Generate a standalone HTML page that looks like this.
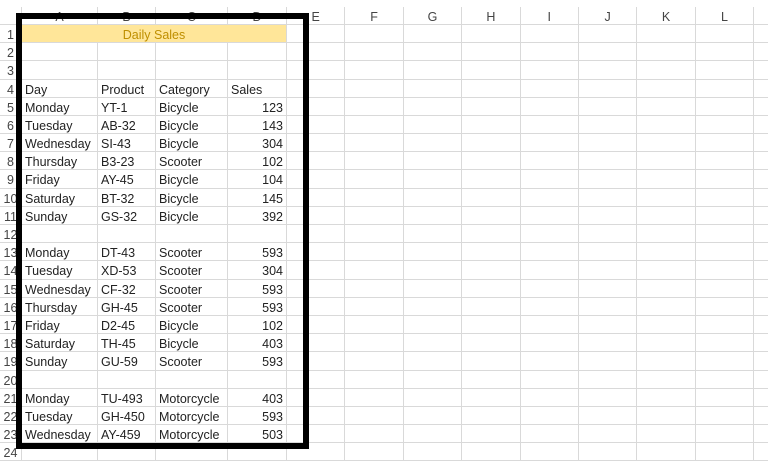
<!DOCTYPE html>
<html><head><style>
body{margin:0;width:768px;height:450px;overflow:hidden;background:#fff;font-family:"Liberation Sans",Arial,sans-serif;font-size:12.5px;color:#222;position:relative}
.r{display:flex;height:18.2px;box-sizing:border-box;border-bottom:1px solid #d9d9d9}
.c{box-sizing:border-box;border-right:1px solid #d9d9d9;height:100%;line-height:20px;padding:0 3px;white-space:nowrap;overflow:hidden;flex:none}
.h{color:#444;text-align:center;padding:0}
.n{text-align:right}
.w0{width:22px}.wa{width:76px}.wb{width:58px}.wc{width:72px}.wd{width:59px}.we{width:58.4px}
</style></head><body>
<div style="position:absolute;top:6.8px;left:0;width:768px">
<div class="r"><div class="c h w0"></div><div class="c h wa">A</div><div class="c h wb">B</div><div class="c h wc">C</div><div class="c h wd">D</div><div class="c h we">E</div><div class="c h we">F</div><div class="c h we">G</div><div class="c h we">H</div><div class="c h we">I</div><div class="c h we">J</div><div class="c h we">K</div><div class="c h we">L</div><div class="c h we">M</div></div>
<div id="rows"></div>
</div>
<div style="position:absolute;left:16px;top:13px;width:281px;height:424px;border:6px solid #000"></div>
<script>
var d=[["","","","","",1],[],[],["Day","Product","Category","Sales"],
["Monday","YT-1","Bicycle",123],["Tuesday","AB-32","Bicycle",143],["Wednesday","SI-43","Bicycle",304],["Thursday","B3-23","Scooter",102],["Friday","AY-45","Bicycle",104],["Saturday","BT-32","Bicycle",145],["Sunday","GS-32","Bicycle",392],[],
["Monday","DT-43","Scooter",593],["Tuesday","XD-53","Scooter",304],["Wednesday","CF-32","Scooter",593],["Thursday","GH-45","Scooter",593],["Friday","D2-45","Bicycle",102],["Saturday","TH-45","Bicycle",403],["Sunday","GU-59","Scooter",593],[],
["Monday","TU-493","Motorcycle",403],["Tuesday","GH-450","Motorcycle",593],["Wednesday","AY-459","Motorcycle",503],["","","",""]];
var h="";
d.forEach(function(r,i){
h+='<div class="r"><div class="c h w0">'+(i+1)+'</div>';
if(i==0){h+='<div class="c" style="width:265px;background:#ffe699;color:#bf8f00;text-align:center;border-right:1px solid #d9d9d9">Daily Sales</div>';}
else{h+='<div class="c wa">'+(r[0]||"")+'</div><div class="c wb">'+(r[1]||"")+'</div><div class="c wc">'+(r[2]||"")+'</div><div class="c wd'+(typeof r[3]=="number"?" n":"")+'">'+(r[3]===undefined?"":r[3])+'</div>';}
for(var k=0;k<9;k++)h+='<div class="c we"></div>';
h+='</div>';});
document.getElementById("rows").innerHTML=h;
</script>
</body></html>
